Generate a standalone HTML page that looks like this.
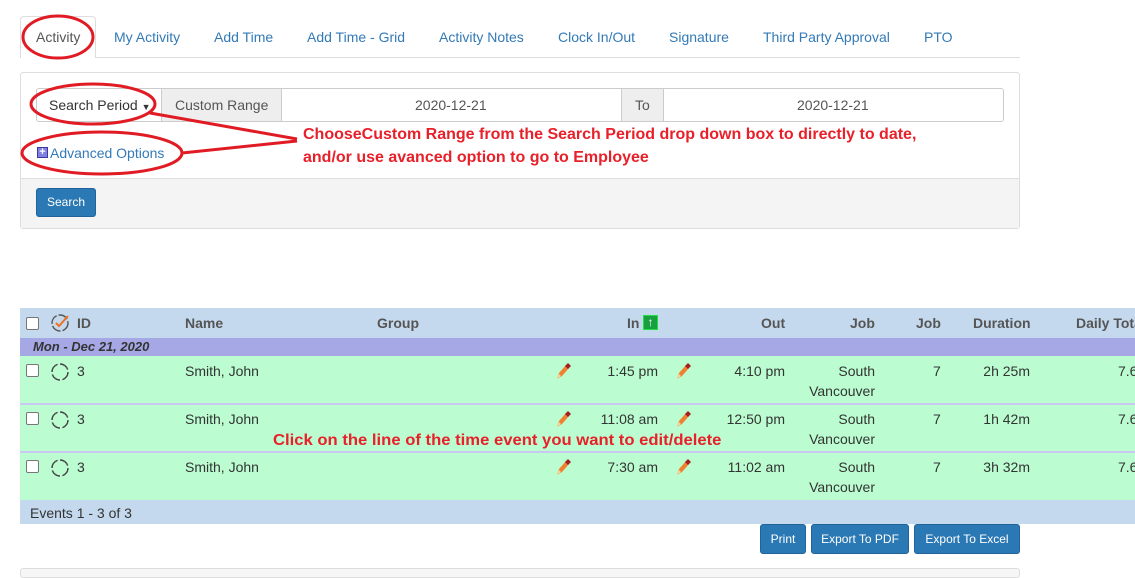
<!DOCTYPE html>
<html><head><meta charset="utf-8"><style>
*{box-sizing:border-box;margin:0;padding:0}
body{width:1135px;height:573px;overflow:hidden;background:#fff;font-family:"Liberation Sans",Arial,sans-serif;font-size:14px;color:#333;position:relative}
.a{position:absolute;white-space:nowrap}
.tab{position:absolute;top:29px;color:#337ab7;font-size:14px}
.red{color:#e8202a;font-weight:bold;font-size:16px;transform:scaleX(1.0);transform-origin:left top}
.th{position:absolute;top:315px;font-weight:bold;color:#555;font-size:14px;white-space:nowrap}
.cb{position:absolute;width:13px;height:13px;border:1px solid #767676;border-radius:2px;background:#fff}
.btn{position:absolute;top:524px;height:30px;background:#2a78b4;border:1px solid #22649a;border-radius:3px;color:#fff;font-size:12px;text-align:center;line-height:28px}
.cell{position:absolute;font-size:14px;color:#333;line-height:20px;white-space:nowrap}
</style></head><body>
<div class="a" style="left:20px;top:16px;width:76px;height:42px;border:1px solid #ddd;border-bottom:none;border-radius:4px 4px 0 0;background:#fff"></div>
<div class="a" style="left:96px;top:57px;width:924px;height:1px;background:#ddd"></div>
<div class="tab" style="left:36px;color:#555">Activity</div>
<div class="tab" style="left:114px">My Activity</div>
<div class="tab" style="left:214px">Add Time</div>
<div class="tab" style="left:307px">Add Time - Grid</div>
<div class="tab" style="left:439px">Activity Notes</div>
<div class="tab" style="left:558px">Clock In/Out</div>
<div class="tab" style="left:669px">Signature</div>
<div class="tab" style="left:763px">Third Party Approval</div>
<div class="tab" style="left:924px">PTO</div>

<div class="a" style="left:20px;top:72px;width:1000px;height:157px;border:1px solid #ddd;border-radius:3px;background:#fff"></div>
<div class="a" style="left:21px;top:178px;width:998px;height:50px;background:#f4f4f4;border-top:1px solid #ddd"></div>
<div class="a" style="left:36px;top:88px;width:968px;height:34px;border:1px solid #ccc;border-radius:3px;background:#fff"></div>
<div class="a" style="left:161px;top:89px;width:121px;height:32px;background:#eee;border-left:1px solid #ccc;border-right:1px solid #ccc"></div>
<div class="a" style="left:621px;top:89px;width:43px;height:32px;background:#eee;border-left:1px solid #ccc;border-right:1px solid #ccc"></div>
<div class="a" style="left:49px;top:97px">Search Period <span style="font-size:9px">▼</span></div>
<div class="a" style="left:175px;top:97px;color:#555">Custom Range</div>
<div class="a" style="left:415px;top:97px;color:#555">2020-12-21</div>
<div class="a" style="left:635px;top:97px;color:#555">To</div>
<div class="a" style="left:797px;top:97px;color:#555">2020-12-21</div>
<div class="a" style="left:37px;top:147px;width:11px;height:11px;border:1px solid #3a3aa0;background:#8080e0;color:#fff;font-size:11px;line-height:9px;text-align:center;font-weight:bold">+</div>
<div class="a" style="left:50px;top:145px;color:#337ab7">Advanced Options</div>
<div class="a" style="left:36px;top:188px;width:60px;height:29px;background:#2a78b4;border:1px solid #22649a;border-radius:3px;color:#fff;font-size:12px;line-height:27px;text-align:center">Search</div>
<div class="a red" style="left:303px;top:126px">ChooseCustom Range from the Search Period drop down box to directly to date,</div>
<div class="a red" style="left:303px;top:149px">and/or use avanced option to go to Employee</div>

<svg class="a" style="left:0;top:0" width="1135" height="300">
<g fill="none" stroke="#e01b24" stroke-width="3">
<ellipse cx="58" cy="37" rx="35" ry="21"/>
<ellipse cx="93" cy="104" rx="62" ry="20"/>
<ellipse cx="102" cy="153" rx="80" ry="21"/>
<line x1="150" y1="113" x2="297" y2="139"/>
<line x1="182" y1="153" x2="297" y2="141"/>
</g></svg>

<div class="a" style="left:20px;top:308px;width:1115px;height:30px;background:#c5d9ee"></div>
<div class="a" style="left:20px;top:338px;width:1115px;height:18px;background:#a6a8e6"></div>
<div class="a" style="left:20px;top:356px;width:1115px;height:144px;background:#bbfdd0"></div>
<div class="a" style="left:20px;top:403px;width:1115px;height:2px;background:#c8c8f0"></div>
<div class="a" style="left:20px;top:451px;width:1115px;height:2px;background:#c8c8f0"></div>
<div class="a" style="left:20px;top:500px;width:1115px;height:24px;background:#c5d9ee"></div>

<div class="cb" style="left:26px;top:317px"></div>
<svg class="a" style="left:50px;top:313px" width="22" height="20"><circle cx="10" cy="10" r="8" fill="none" stroke="#555" stroke-width="1.4" stroke-dasharray="10 2"/><path d="M6 10 L9 13 L18 3" fill="none" stroke="#f07020" stroke-width="2"/></svg>
<div class="th" style="left:77px">ID</div>
<div class="th" style="left:185px">Name</div>
<div class="th" style="left:377px">Group</div>
<div class="th" style="left:627px">In</div>
<div class="a" style="left:643px;top:315px;width:15px;height:15px;background:#18a040;border:1px solid #20e040;color:#fff;font-size:12px;font-weight:bold;text-align:center;line-height:13px">↑</div>
<div class="th" style="left:761px">Out</div>
<div class="th" style="left:850px">Job</div>
<div class="th" style="left:916px">Job</div>
<div class="th" style="left:973px">Duration</div>
<div class="th" style="left:1076px">Daily Total</div>
<div class="a" style="left:33px;top:339px;font-weight:bold;font-style:italic;font-size:13px;color:#333">Mon - Dec 21, 2020</div>

<div id="rows"></div>
<script>
var d=[["1:45 pm","4:10 pm","2h 25m"],["11:08 am","12:50 pm","1h 42m"],["7:30 am","11:02 am","3h 32m"]];
var h="";
function pen(x,y){return '<svg class="a" style="left:'+x+'px;top:'+y+'px" width="16" height="18"><path d="M2 17 L4 11 L11 3 L14 6 L7 14 Z" fill="#f08030"/><path d="M10 4 L13 1 L16 4 L13 7 Z" fill="#a02020"/><path d="M2 17 L4 12 L6 14 Z" fill="#f8d8a0"/></svg>';}
d.forEach(function(r,i){var t=356+i*48;
h+='<div class="cb" style="left:26px;top:'+(t+8)+'px"></div>';
h+='<svg class="a" style="left:50px;top:'+(t+6)+'px" width="20" height="20"><circle cx="10" cy="10" r="8" fill="none" stroke="#444" stroke-width="1.4" stroke-dasharray="10 2.5"/></svg>';
h+='<div class="cell" style="left:77px;top:'+(t+5)+'px">3</div>';
h+='<div class="cell" style="left:185px;top:'+(t+5)+'px">Smith, John</div>';
h+=pen(555,t+6)+pen(675,t+6);
h+='<div class="cell" style="right:477px;top:'+(t+5)+'px">'+r[0]+'</div>';
h+='<div class="cell" style="right:350px;top:'+(t+5)+'px">'+r[1]+'</div>';
h+='<div class="cell" style="right:260px;top:'+(t+5)+'px;text-align:right">South<br>Vancouver</div>';
h+='<div class="cell" style="left:933px;top:'+(t+5)+'px">7</div>';
h+='<div class="cell" style="right:105px;top:'+(t+5)+'px">'+r[2]+'</div>';
h+='<div class="cell" style="left:1118px;top:'+(t+5)+'px">7.6</div>';
});
document.getElementById("rows").innerHTML=h;
</script>
<div class="a red" style="left:273px;top:432px;transform:scaleX(1.04)">Click on the line of the time event you want to edit/delete</div>
<div class="a" style="left:30px;top:505px;font-size:14px;color:#333">Events 1 - 3 of 3</div>

<div class="btn" style="left:760px;width:46px">Print</div>
<div class="btn" style="left:811px;width:98px">Export To PDF</div>
<div class="btn" style="left:914px;width:106px">Export To Excel</div>
<div class="a" style="left:20px;top:568px;width:1000px;height:10px;border:1px solid #ddd;border-radius:3px;background:#f6f6f6"></div>
</body></html>
